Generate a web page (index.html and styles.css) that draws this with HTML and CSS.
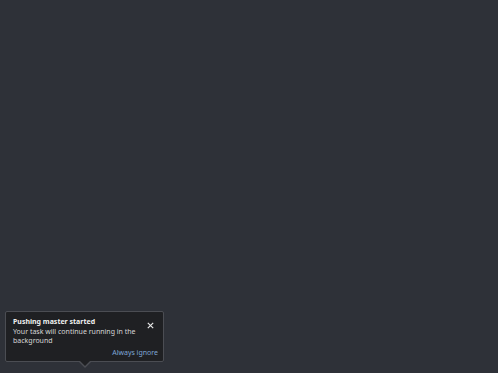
FILE: index.html
```html
<!DOCTYPE html>
<html>
<head>
<meta charset="utf-8">
<link rel="stylesheet" href="styles.css">
</head>
<body>
<div class="screen">
  <div class="toast">
    <div class="toast-head">
      <div class="toast-text">
        <div class="title">Pushing master started</div>
        <div class="msg">Your task will continue running in the background</div>
      </div>
      <svg class="close" width="7" height="7" viewBox="0 0 7 7"><path d="M0.8 0.8L6.2 6.2M6.2 0.8L0.8 6.2" stroke="#e6e6e6" stroke-width="1.2"/></svg>
    </div>
    <div class="actions"><span class="link">Always ignore</span></div>
    <div class="arrow"></div>
  </div>
</div>
</body>
</html>
```
FILE: styles.css
```css
html, body {
  margin: 0;
  padding: 0;
  width: 498px;
  height: 373px;
  overflow: hidden;
  background: #2e3138;
}
.screen {
  width: 498px;
  height: 373px;
  display: flex;
  align-items: flex-end;
  padding: 0 0 11px 5px;
  box-sizing: border-box;
  font-family: "Noto Sans", "Open Sans", sans-serif;
}
.toast {
  position: relative;
  width: 159px;
  box-sizing: border-box;
  background: #1f2023;
  border: 1px solid #4b4d53;
  border-radius: 2px;
  padding: 5px 5px 4px 7px;
  color: #dcdcdc;
}
.toast-head {
  display: flex;
  justify-content: space-between;
  align-items: flex-start;
}
.toast-text {
  width: 130px;
}
.title {
  font-weight: bold;
  font-size: 7px;
  line-height: 9.5px;
  color: #f0f0f0;
}
.msg {
  font-size: 7px;
  line-height: 9.5px;
  color: #d6d6d6;
}
.close {
  margin-top: 5px;
  margin-right: 4px;
}
.actions {
  display: flex;
  justify-content: flex-end;
  margin-top: 2px;
}
.link {
  font-size: 7px;
  line-height: 9.5px;
  color: #7ea6d6;
}
.arrow {
  position: absolute;
  left: 72px;
  bottom: -7px;
  width: 0;
  height: 0;
  border-left: 7px solid transparent;
  border-right: 7px solid transparent;
  border-top: 7px solid #4b4d53;
}
.arrow::after {
  content: "";
  position: absolute;
  left: -6px;
  top: -8px;
  border-left: 6px solid transparent;
  border-right: 6px solid transparent;
  border-top: 6px solid #1f2023;
}
```
